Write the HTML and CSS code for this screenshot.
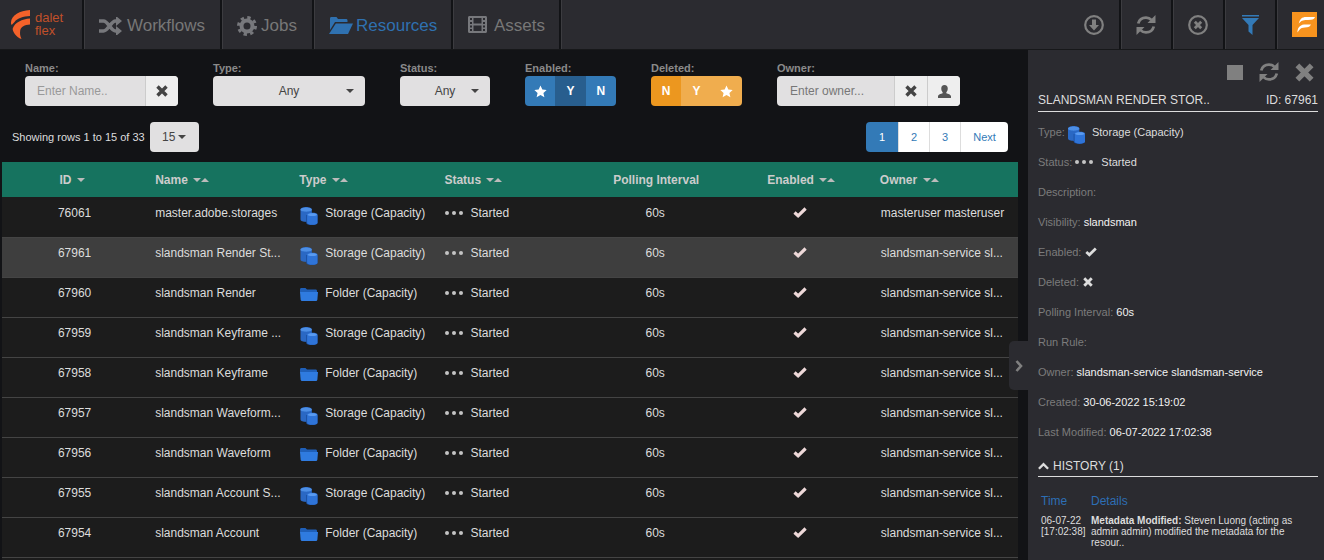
FILE: index.html
```html
<!DOCTYPE html>
<html lang="en">
<head>
<meta charset="utf-8">
<title>Dalet Flex - Resources</title>
<link rel="stylesheet" href="styles.css">
</head>
<body>
<svg class="defs" aria-hidden="true">
  <symbol id="i-storage" viewBox="0 0 18 19">
    <path fill="#2a68c4" d="M0 3c0-4 12-4 12 0v10c0 2-3 2.800-6 2.800S0 15 0 13z"/>
    <path fill="#4d8fe6" d="M0 3c0-3.400 12-3.400 12 0 0 2.600-12 2.600-12 0z"/>
    <path fill="#1c4f9f" d="M6 8.500h12v8c0 3.300-12 3.300-12 0z"/>
    <path fill="#2f74d8" d="M7 8.200c0-2.800 11-2.800 11 0v8.300c0 3-11 3-11 0z"/>
    <path fill="#5a9bf0" d="M7.500 8.200c0-2.200 10-2.200 10 0 0 1.900-10 1.900-10 0z"/>
  </symbol>
  <symbol id="i-folder" viewBox="0 0 18 14">
    <path fill="#1f5fb8" d="M0 2.500C0 1.500.6 1 1.500 1h4l1.500 1.500h8.500c1 0 1.500.5 1.500 1.500v1H0z"/>
    <path fill="#2f7be0" d="M0 5h18l-.6 7.500c-.1.900-.6 1.500-1.500 1.500H2.100c-.9 0-1.400-.6-1.500-1.500z"/>
  </symbol>
  <symbol id="i-check" viewBox="0 0 14 11">
    <path fill="none" stroke="currentColor" stroke-width="3.200" d="M1.500 5.500l3.600 3.300 7.500-7.300"/>
  </symbol>
  <symbol id="i-x" viewBox="0 0 12 12">
    <path fill="none" stroke="currentColor" stroke-width="3.400" d="M1.500 1.500l9 9M10.500 1.500l-9 9"/>
  </symbol>
  <symbol id="i-refresh" viewBox="0 0 20 20">
    <path fill="none" stroke="currentColor" stroke-width="2.800" d="M2.200 8.500C3.200 4.800 6.200 2.600 10 2.600c2.200 0 4 .8 5.400 2.300M17.800 11.500c-1 3.700-4 5.900-7.800 5.900-2.200 0-4-.8-5.400-2.300"/>
    <path fill="currentColor" d="M19.500 0v8h-8zM.5 20v-8h8z"/>
  </symbol>
  <symbol id="i-star" viewBox="0 0 12 12">
    <path fill="currentColor" d="M6 .5l1.700 3.700 4 .4-3 2.700.9 4L6 9.200l-3.600 2.100.9-4-3-2.700 4-.4z"/>
  </symbol>
</svg>

<div class="app">
  <nav class="topbar">
    <a class="logo">
      <svg class="logo-mark" viewBox="0 0 19 29"><path fill="#f4622a" d="M19 0v6C12 6.500 6.500 8 3.500 12 1.500 14 .5 16 0 13.500-.5 6 8 .5 19 0z"/><path fill="#f4622a" d="M19 8.500v6c-5.500.5-9 2-9.800 6-.4 3-.2 5.200 1.300 8.500C5 27 1 21 1.800 18.200 4 12.500 11 9 19 8.500z"/></svg>
      <span class="logo-text">dalet<br>flex</span>
    </a>
    <a class="nav-item">
      <svg class="nav-icon shuffle" viewBox="0 0 23 18"><path fill="none" stroke="currentColor" stroke-width="3.600" d="M0 4h4.500c4.500 0 7.500 10 12 10h2M0 14h4.500c4.500 0 7.500-10 12-10h2"/><path fill="currentColor" d="M17 -1l6 5-6 5zM17 9l6 5-6 5z"/></svg>
      Workflows
    </a>
    <a class="nav-item">
      <svg class="nav-icon cog" viewBox="0 0 20 20"><circle cx="10" cy="10" r="5.500" fill="none" stroke="currentColor" stroke-width="4"/><circle cx="10" cy="10" r="8.500" fill="none" stroke="currentColor" stroke-width="3" stroke-dasharray="3.340 3.340"/></svg>
      Jobs
    </a>
    <a class="nav-item active">
      <svg class="nav-icon folder-open" viewBox="0 0 24 18"><path fill="currentColor" d="M1 2.500C1 1.500 1.600 1 2.500 1h5L9 3h8c1 0 1.500.5 1.500 1.500V6H6L1 14z"/><path fill="currentColor" d="M6.800 7.500H24L19 18H0z"/></svg>
      Resources
    </a>
    <a class="nav-item">
      <svg class="nav-icon film" viewBox="0 0 19 17"><path fill="currentColor" fill-rule="evenodd" d="M0 1.500C0 .6.600 0 1.500 0h16c.9 0 1.500.6 1.500 1.500v14c0 .9-.6 1.500-1.500 1.500h-16C.6 17 0 16.400 0 15.500zM2 2v2h2V2zm0 4v2h2V6zm0 3.500v2h2v-2zM2 13v2h2v-2zM15 2v2h2V2zm0 4v2h2V6zm0 3.500v2h2v-2zm0 3.500v2h2v-2zM5.500 2v5.500h8V2zm0 7.500V15h8V9.500z"/></svg>
      Assets
    </a>
    <div class="topbar-spacer"></div>
    <a class="tool-item"><svg class="tool-icon" viewBox="0 0 20 20"><circle cx="10" cy="10" r="8.800" fill="none" stroke="currentColor" stroke-width="2.200"/><path fill="currentColor" d="M8 4.500h4V10h3l-5 5.500L5 10h3z"/></svg></a>
    <a class="tool-item"><svg class="tool-icon"><use href="#i-refresh"/></svg></a>
    <a class="tool-item"><svg class="tool-icon" viewBox="0 0 20 20"><circle cx="10" cy="10" r="8.800" fill="none" stroke="currentColor" stroke-width="2.200"/><path fill="none" stroke="currentColor" stroke-width="2.800" d="M6.800 6.800l6.400 6.400M13.200 6.800l-6.400 6.400"/></svg></a>
    <a class="tool-item filter"><svg class="filter-icon" viewBox="0 0 17 20"><path fill="currentColor" d="M0 0h17v1.500H0zM0 3h17l-6.500 7v10l-4-3.500V10z"/></svg></a>
    <a class="brand-item"><span class="brand-box"><svg class="brand-f" viewBox="0 0 25 25"><path fill="#fff" d="M23 5c-.8 1.800-1.800 2.600-4 2.800-4 .3-8 .2-9.500 1.200-1 .7-2 1.800-2.800 2.500C8 7 10 5 14 5zM19 12.500c-.8 1.700-2 2.500-4 2.700-2.800.2-5 .4-6.500 1.500-1.200 1-2.200 2.400-3 3.800-.3-4 2-7.500 6.500-8z"/></svg></span></a>
  </nav>

  <div class="workspace">
    <main class="content">
      <form class="filters">
        <div class="filter-group">
          <label class="filter-label">Name:</label>
          <div class="input-group name-group">
            <span class="text-input">Enter Name..</span>
            <span class="addon"><svg class="addon-x"><use href="#i-x"/></svg></span>
          </div>
        </div>
        <div class="filter-group">
          <label class="filter-label">Type:</label>
          <div class="select type-select"><span></span><span>Any</span><i class="caret"></i></div>
        </div>
        <div class="filter-group">
          <label class="filter-label">Status:</label>
          <div class="select status-select"><span></span><span>Any</span><i class="caret"></i></div>
        </div>
        <div class="filter-group">
          <label class="filter-label">Enabled:</label>
          <div class="toggle blue">
            <span class="toggle-btn"><svg class="star"><use href="#i-star"/></svg></span>
            <span class="toggle-btn on">Y</span>
            <span class="toggle-btn">N</span>
          </div>
        </div>
        <div class="filter-group">
          <label class="filter-label">Deleted:</label>
          <div class="toggle amber">
            <span class="toggle-btn on">N</span>
            <span class="toggle-btn">Y</span>
            <span class="toggle-btn"><svg class="star"><use href="#i-star"/></svg></span>
          </div>
        </div>
        <div class="filter-group">
          <label class="filter-label">Owner:</label>
          <div class="input-group owner-group">
            <span class="text-input">Enter owner...</span>
            <span class="addon"><svg class="addon-x"><use href="#i-x"/></svg></span>
            <span class="addon"><svg class="addon-user" viewBox="0 0 12 12"><path fill="currentColor" d="M6 0c2 0 3 1.400 3 3.200 0 1.500-.6 2.700-1.300 3.400v1c1.500.6 4.300 1.200 4.300 2.800V12H0v-1.600c0-1.600 2.800-2.200 4.300-2.800v-1C3.600 5.900 3 4.700 3 3.200 3 1.400 4 0 6 0z"/></svg></span>
          </div>
        </div>
      </form>

      <div class="pager-row">
        <div class="rows-info">
          <span>Showing rows 1 to 15 of 33</span>
          <span class="page-size">15 <i class="caret"></i></span>
        </div>
        <div class="pagination">
          <a class="page current">1</a><a class="page">2</a><a class="page">3</a><a class="page next">Next</a>
        </div>
      </div>

      <table class="grid">
        <thead>
          <tr>
            <th class="center id-head">ID <i class="sort-down"></i></th>
            <th>Name <i class="sort-down"></i><i class="sort-up"></i></th>
            <th>Type <i class="sort-down"></i><i class="sort-up"></i></th>
            <th>Status <i class="sort-down"></i><i class="sort-up"></i></th>
            <th class="center">Polling Interval</th>
            <th class="center">Enabled <i class="sort-down"></i><i class="sort-up"></i></th>
            <th>Owner <i class="sort-down"></i><i class="sort-up"></i></th>
          </tr>
        </thead>
        <tbody>
          <tr>
            <td class="center">76061</td><td>master.adobe.storages</td>
            <td><svg class="type-icon"><use href="#i-storage"/></svg>Storage (Capacity)</td>
            <td><span class="dots"><b></b><b></b><b></b></span>Started</td>
            <td class="center">60s</td><td class="center"><svg class="check"><use href="#i-check"/></svg></td><td>masteruser masteruser</td>
          </tr>
          <tr class="selected">
            <td class="center">67961</td><td>slandsman Render St...</td>
            <td><svg class="type-icon"><use href="#i-storage"/></svg>Storage (Capacity)</td>
            <td><span class="dots"><b></b><b></b><b></b></span>Started</td>
            <td class="center">60s</td><td class="center"><svg class="check"><use href="#i-check"/></svg></td><td>slandsman-service sl...</td>
          </tr>
          <tr>
            <td class="center">67960</td><td>slandsman Render</td>
            <td><svg class="type-icon folder-type"><use href="#i-folder"/></svg>Folder (Capacity)</td>
            <td><span class="dots"><b></b><b></b><b></b></span>Started</td>
            <td class="center">60s</td><td class="center"><svg class="check"><use href="#i-check"/></svg></td><td>slandsman-service sl...</td>
          </tr>
          <tr>
            <td class="center">67959</td><td>slandsman Keyframe ...</td>
            <td><svg class="type-icon"><use href="#i-storage"/></svg>Storage (Capacity)</td>
            <td><span class="dots"><b></b><b></b><b></b></span>Started</td>
            <td class="center">60s</td><td class="center"><svg class="check"><use href="#i-check"/></svg></td><td>slandsman-service sl...</td>
          </tr>
          <tr>
            <td class="center">67958</td><td>slandsman Keyframe</td>
            <td><svg class="type-icon folder-type"><use href="#i-folder"/></svg>Folder (Capacity)</td>
            <td><span class="dots"><b></b><b></b><b></b></span>Started</td>
            <td class="center">60s</td><td class="center"><svg class="check"><use href="#i-check"/></svg></td><td>slandsman-service sl...</td>
          </tr>
          <tr>
            <td class="center">67957</td><td>slandsman Waveform...</td>
            <td><svg class="type-icon"><use href="#i-storage"/></svg>Storage (Capacity)</td>
            <td><span class="dots"><b></b><b></b><b></b></span>Started</td>
            <td class="center">60s</td><td class="center"><svg class="check"><use href="#i-check"/></svg></td><td>slandsman-service sl...</td>
          </tr>
          <tr>
            <td class="center">67956</td><td>slandsman Waveform</td>
            <td><svg class="type-icon folder-type"><use href="#i-folder"/></svg>Folder (Capacity)</td>
            <td><span class="dots"><b></b><b></b><b></b></span>Started</td>
            <td class="center">60s</td><td class="center"><svg class="check"><use href="#i-check"/></svg></td><td>slandsman-service sl...</td>
          </tr>
          <tr>
            <td class="center">67955</td><td>slandsman Account S...</td>
            <td><svg class="type-icon"><use href="#i-storage"/></svg>Storage (Capacity)</td>
            <td><span class="dots"><b></b><b></b><b></b></span>Started</td>
            <td class="center">60s</td><td class="center"><svg class="check"><use href="#i-check"/></svg></td><td>slandsman-service sl...</td>
          </tr>
          <tr>
            <td class="center">67954</td><td>slandsman Account</td>
            <td><svg class="type-icon folder-type"><use href="#i-folder"/></svg>Folder (Capacity)</td>
            <td><span class="dots"><b></b><b></b><b></b></span>Started</td>
            <td class="center">60s</td><td class="center"><svg class="check"><use href="#i-check"/></svg></td><td>slandsman-service sl...</td>
          </tr>
          <tr><td colspan="7"></td></tr>
        </tbody>
      </table>
    </main>

    <aside class="panel">
      <a class="panel-toggle"><svg class="chevron" viewBox="0 0 8 12"><path fill="none" stroke="currentColor" stroke-width="2.600" d="M1.500 1l4.500 5-4.500 5"/></svg></a>
      <div class="panel-actions">
        <span class="stop"></span>
        <svg class="panel-refresh"><use href="#i-refresh"/></svg>
        <svg class="panel-close"><use href="#i-x"/></svg>
      </div>
      <div class="panel-title"><span>SLANDSMAN RENDER STOR..</span><span>ID: 67961</span></div>
      <div class="prop"><span class="key">Type:</span> <svg class="type-icon panel-type"><use href="#i-storage"/></svg><span class="val">Storage (Capacity)</span></div>
      <div class="prop"><span class="key">Status:</span> <span class="dots panel-dots"><b></b><b></b><b></b></span><span class="val">Started</span></div>
      <div class="prop"><span class="key">Description:</span></div>
      <div class="prop"><span class="key">Visibility:</span> <span class="val strong">slandsman</span></div>
      <div class="prop"><span class="key">Enabled:</span> <svg class="prop-icon"><use href="#i-check"/></svg></div>
      <div class="prop"><span class="key">Deleted:</span> <svg class="prop-icon x"><use href="#i-x"/></svg></div>
      <div class="prop"><span class="key">Polling Interval:</span> <span class="val strong">60s</span></div>
      <div class="prop"><span class="key">Run Rule:</span></div>
      <div class="prop"><span class="key">Owner:</span> <span class="val strong">slandsman-service slandsman-service</span></div>
      <div class="prop"><span class="key">Created:</span> <span class="val strong">30-06-2022 15:19:02</span></div>
      <div class="prop"><span class="key">Last Modified:</span> <span class="val strong">06-07-2022 17:02:38</span></div>
      <div class="history-head"><svg class="chev-up" viewBox="0 0 12 8"><path fill="none" stroke="currentColor" stroke-width="2.600" d="M1 7l5-5 5 5"/></svg>HISTORY (1)</div>
      <div class="history">
        <div class="hist-time hist-th">Time</div><div class="hist-th">Details</div>
        <div class="hist-time">06-07-22 [17:02:38]</div>
        <div><strong>Metadata Modified:</strong> Steven Luong (acting as admin admin) modified the metadata for the resour..</div>
      </div>
    </aside>
  </div>
</div>
</body>
</html>
```
FILE: styles.css
```css
* { box-sizing: border-box; }
html, body { margin: 0; height: 100%; overflow: hidden; }
body { background: #121316; color: #ddd; font: 12px/17px "Liberation Sans", Arial, sans-serif; }
.defs { display: none; }
.app { height: 560px; display: flex; flex-direction: column; overflow: hidden; }

/* Top bar */
.topbar { flex: 0 0 50px; height: 50px; display: flex; align-items: stretch; background: #2b2b30; border-bottom: 1px solid #17181a; }
.logo { width: 84px; display: flex; align-items: center; border-right: 2px solid #121316; box-shadow: 1px 0 0 #3c3c40; padding-left: 11px; }
.logo-mark { width: 19px; height: 29px; }
.logo-text { margin-left: 5px; color: #c0502a; font-size: 13px; line-height: 13px; margin-top: -1px; }
.nav-item { display: flex; align-items: center; padding: 2px 15px 0; font-size: 17px; color: #777; border-right: 2px solid #121316; box-shadow: 1px 0 0 #3c3c40; white-space: nowrap; }
.nav-item:nth-child(2) { width: 138px; }
.nav-item:nth-child(3) { width: 92px; }
.nav-item:nth-child(4) { width: 139px; }
.nav-item:nth-child(5) { width: 108px; }
.nav-item.active { color: #2f71b0; }
.nav-icon { color: #77787c; flex: none; }
.shuffle { width: 23px; height: 18px; margin-right: 5px; }
.cog { width: 20px; height: 20px; margin-right: 4px; }
.folder-open { width: 24px; height: 18px; margin-right: 3px; margin-top: -2px; color: #2f71b0; }
.film { width: 19px; height: 17px; margin-right: 7px; margin-top: -2px; }
.topbar-spacer { flex: 1; }
.tool-item { width: 52px; display: flex; align-items: center; justify-content: center; border-right: 2px solid #121316; box-shadow: 1px 0 0 #3c3c40; color: #808080; }
.tool-icon { width: 20px; height: 20px; }
.filter-icon { width: 17px; height: 20px; color: #337ab7; }
.brand-item { width: 47px; display: flex; align-items: center; padding-left: 15px; }
.brand-box { width: 25px; height: 25px; background: #f7931e; display: block; }
.brand-f { width: 25px; height: 25px; display: block; }

/* Workspace */
.workspace { flex: 1; min-height: 0; display: flex; }
.content { width: 1028px; padding: 0 10px 0 2px; overflow: hidden; }
.filters { display: flex; gap: 35px; padding: 11px 0 0 23px; height: 72px; }
.filter-label { display: block; font-weight: bold; color: #8a8a8a; font-size: 11px; line-height: 15px; }
.input-group { display: flex; height: 30px; border-radius: 4px; overflow: hidden; background: #e1e0e1; }
.name-group { width: 153px; }
.owner-group { width: 183px; }
.text-input { flex: 1; display: flex; align-items: center; padding-left: 12px; color: #999; }
.owner-group .text-input { padding-left: 13px; color: #777; }
.addon { width: 33px; flex: none; display: flex; align-items: center; justify-content: center; background: #eee; border-left: 1px solid #ccc; color: #444; }
.addon-x { width: 12px; height: 12px; }
.addon-user { width: 13px; height: 13px; color: #555; }
.select { display: grid; grid-template-columns: 1fr auto 1fr; align-items: center; height: 30px; background: #e1e0e1; border-radius: 4px; color: #444; padding: 0 11px; }
.select .caret { justify-self: end; }
.type-select { width: 152px; }
.status-select { width: 90px; }
.caret { display: inline-block; width: 0; height: 0; border-top: 4px solid #444; border-left: 4px solid transparent; border-right: 4px solid transparent; }
.toggle { display: flex; width: 91px; height: 30px; border-radius: 4px; overflow: hidden; color: #fff; font-weight: bold; }
.toggle-btn { flex: 1; display: flex; align-items: center; justify-content: center; }
.star { width: 13px; height: 13px; }
.blue .toggle-btn { background: #337ab7; }
.blue .toggle-btn.on { background: #285e8e; }
.amber .toggle-btn { background: #f0ad4e; }
.amber .toggle-btn.on { background: #ec971f; }

.pager-row { display: flex; justify-content: space-between; align-items: flex-start; height: 40px; }
.rows-info { display: flex; align-items: center; gap: 5px; padding-left: 10px; height: 30px; color: #ddd; font-size: 11px; }
.page-size { width: 49px; height: 30px; display: flex; align-items: center; justify-content: center; gap: 3px; background: #e1e0e1; border-radius: 4px; color: #444; font-size: 12px; }
.pagination { display: flex; height: 30px; margin-right: 10px; border-radius: 4px; overflow: hidden; }
.page { width: 31px; display: flex; align-items: center; justify-content: center; background: #fff; color: #337ab7; border-left: 1px solid #ddd; font-size: 11px; }
.page.current { width: 32px; background: #337ab7; color: #fff; border-left: 0; }
.page.next { width: 48px; }

/* Table */
.grid { width: 1016px; table-layout: fixed; border-collapse: collapse; }
.grid th { height: 35px; padding: 2px 8px 0 7px; background: #16735f; color: #ccc; text-align: left; font-weight: bold; }
.grid th:nth-child(2) { padding-left: 8px; }
.grid th.center { padding-left: 8px; padding-right: 6px; }
.grid th.center, .grid td.center { text-align: center; }
.grid th.id-head { padding-right: 13px; }
.grid td { height: 40px; padding: 7px 8px 0 8px; vertical-align: top; background: #1c1c1c; border-top: 1px solid #444; white-space: nowrap; overflow: hidden; }
.grid tbody tr:first-child td { border-top: 0; padding-top: 8px; }
.grid tr.selected td { background: #3e3e3e; }
.sort-down, .sort-up { display: inline-block; width: 0; height: 0; border-left: 4px solid transparent; border-right: 4px solid transparent; vertical-align: 2px; margin-left: 1px; }
.sort-down { border-top: 4px solid #bbb; margin-left: 2px; }
.sort-up { border-bottom: 4px solid #bbb; margin-left: 0; }
.type-icon { width: 18px; height: 18px; vertical-align: -4px; margin: -4px 7px -4px 0; }
.folder-type { height: 14px; vertical-align: 0; }
.dots { display: inline-flex; gap: 3px; width: 25px; vertical-align: 2px; }
.dots b { width: 4px; height: 4px; border-radius: 50%; background: #c4c4c4; }
.check { width: 14px; height: 11px; color: #eed9d9; vertical-align: -1px; }

/* Side panel */
.panel { position: relative; flex: 1; background: #2b2b30; padding: 0 6px 0 10px; color: #ddd; font-size: 11px; }
.panel-toggle { position: absolute; left: -19px; top: 291px; width: 19px; height: 49px; background: #2b2b30; border-radius: 5px 0 0 5px; display: flex; align-items: center; justify-content: center; color: #808080; }
.chevron { width: 8px; height: 12px; }
.panel-actions { height: 40px; display: flex; align-items: center; justify-content: flex-end; gap: 16px; color: #808080; padding: 0 4px 0 0; margin-top: 2px; margin-bottom: -2px; }
.stop { width: 16px; height: 15px; background: #808080; }
.panel-refresh { width: 20px; height: 20px; }
.panel-close { width: 19px; height: 19px; }
.panel-title { display: flex; justify-content: space-between; height: 22px; line-height: 21px; border-bottom: 1px solid #ddd; margin-bottom: 5px; font-size: 12px; color: #ddd; }
.prop { height: 30px; line-height: 30px; white-space: nowrap; font-size: 11px; }
.key { color: #7c7c7c; }
.val { color: #ddd; }
.val.strong { color: #f2f2f2; }
.panel-type { margin: -4px 7px -4px 0; width: 17px; height: 18px; }
.panel-dots { width: 26px; vertical-align: 2px; }
.prop-icon { width: 12px; height: 10px; color: #ddd; vertical-align: -1px; }
.history-head { height: 21px; margin-top: 9px; font-size: 12px; line-height: 21px; border-bottom: 1px solid #ddd; color: #ddd; }
.chev-up { width: 11px; height: 8px; margin-right: 4px; }
.history { display: grid; grid-template-columns: 50px 1fr; font-size: 10px; line-height: 11px; margin-top: 16px; padding-left: 3px; }
.hist-th { color: #2d6eb5; font-size: 12px; line-height: 17px; margin-bottom: 5px; }
.hist-time { padding-right: 4px; }
.history strong { color: #ddd; }
```
